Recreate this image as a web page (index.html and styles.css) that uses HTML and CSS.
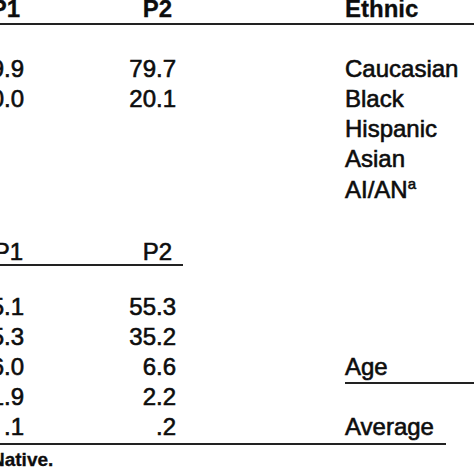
FILE: index.html
```html
<!DOCTYPE html>
<html lang="en">
<head>
<meta charset="utf-8">
<title>Table</title>
<link rel="stylesheet" href="styles.css">
</head>
<body>
<div class="sheet">
  <div class="row hdr1">
    <div class="c1 bold pad-h1">P1</div>
    <div class="c2 bold pad-h2">P2</div>
    <div class="c3"></div>
    <div class="c4 bold span-end">Ethnic</div>
  </div>
  <div class="body1">
    <div class="row r1">
      <div class="c1">79.9</div>
      <div class="c2">79.7</div>
      <div class="c3"></div>
      <div class="c4 span-end">Caucasian</div>
    </div>
    <div class="row r1">
      <div class="c1">20.0</div>
      <div class="c2">20.1</div>
      <div class="c3"></div>
      <div class="c4 span-end">Black</div>
    </div>
    <div class="row r1">
      <div class="c1"></div>
      <div class="c2"></div>
      <div class="c3"></div>
      <div class="c4 span-end">Hispanic</div>
    </div>
    <div class="row r1">
      <div class="c1"></div>
      <div class="c2"></div>
      <div class="c3"></div>
      <div class="c4 span-end">Asian</div>
    </div>
    <div class="row r1">
      <div class="c1"></div>
      <div class="c2"></div>
      <div class="c3"></div>
      <div class="c4 span-end">AI/AN<span class="sup">a</span></div>
    </div>
  </div>

  <div class="row hdr2">
    <div class="c1 rule pad-h1b">P1</div>
    <div class="c2 rule pad-h2">P2</div>
    <div class="c3"></div>
    <div class="c4 span-end"></div>
  </div>
  <div class="body2">
    <div class="row r2">
      <div class="c1">55.1</div>
      <div class="c2">55.3</div>
      <div class="c3"></div>
      <div class="c4 span-end"></div>
    </div>
    <div class="row r2">
      <div class="c1">35.3</div>
      <div class="c2">35.2</div>
      <div class="c3"></div>
      <div class="c4 span-end"></div>
    </div>
    <div class="row r2">
      <div class="c1">6.0</div>
      <div class="c2">6.6</div>
      <div class="c3"></div>
      <div class="c4 span-end underline">Age</div>
    </div>
    <div class="row r2">
      <div class="c1">1.9</div>
      <div class="c2">2.2</div>
      <div class="c3"></div>
      <div class="c4 span-end"></div>
    </div>
    <div class="row r2 last">
      <div class="c1 rule">.1</div>
      <div class="c2 rule">.2</div>
      <div class="c3 rule"></div>
      <div class="c4 rule">Average</div>
      <div class="c5"></div>
    </div>
  </div>
  <p class="note">Native.</p>
</div>
</body>
</html>
```

FILE: styles.css
```css
html, body {
  margin: 0;
  padding: 0;
  background: #ffffff;
}

body {
  width: 474px;
  height: 474px;
  overflow: hidden;
  font-family: "Liberation Sans", Arial, sans-serif;
  font-size: 24px;
  color: #0d0d0d;
  -webkit-text-stroke: 0.6px #0d0d0d;
}

.sheet {
  margin-left: -40px;
}

.row {
  display: grid;
  grid-template-columns: 64px 159px 162px 101px 1fr;
}

.c1 {
  grid-column: 1;
  text-align: right;
  white-space: nowrap;
}

.c2 {
  grid-column: 2;
  text-align: right;
  padding-right: 7px;
  white-space: nowrap;
}

.c3 {
  grid-column: 3;
}

.c4 {
  grid-column: 4;
  white-space: nowrap;
}

.c5 {
  grid-column: 5;
}

.span-end {
  grid-column: 4 / -1;
}

.bold {
  font-weight: bold;
  -webkit-text-stroke: 0.3px #0d0d0d;
}

.pad-h1 {
  padding-right: 4px;
}

.pad-h1b {
  padding-right: 1px;
}

.pad-h2 {
  padding-right: 11px;
}

.hdr1 {
  margin-top: -5px;
  line-height: 28px;
  border-bottom: 2px solid #222222;
}

.body1 {
  padding-top: 28.5px;
}

.r1 {
  line-height: 30.25px;
}

.hdr2 {
  margin-top: 34px;
  line-height: 25px;
}

.rule {
  border-bottom: 2px solid #222222;
}

.body2 {
  padding-top: 25.85px;
}

.r2 {
  line-height: 30.2px;
}

.underline {
  border-bottom: 2px solid #222222;
  margin-bottom: -2px;
}

.sup {
  font-size: 15px;
  line-height: 0;
  vertical-align: 9px;
}

.note {
  margin: 5px 0 0 31px;
  font-size: 19px;
  font-weight: bold;
  line-height: 20px;
  white-space: nowrap;
  -webkit-text-stroke: 0.3px #0d0d0d;
}
```
